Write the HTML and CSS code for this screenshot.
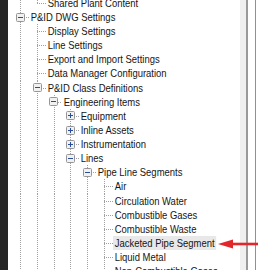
FILE: index.html
```html
<html>
    <head>
        <link rel="stylesheet" href="styles.css">
    </head>
    <body>
        <div class="rail"></div>
        <div class="tree">
            <div class="list">
                <div class="row"><span class="g on"></span><span class="j end"></span><span class="label">Shared Plant Content</span></div>
                <div class="row"><span class="j tee"><svg class="box" width="9" height="9" viewBox="0 0 9 9"><rect x="0.5" y="0.5" width="8" height="8" rx="1" fill="#f1f1f1" stroke="#969696"/><path d="M2 4.5h5" stroke="#2a4d9b"/></svg></span><span class="label">P&amp;ID DWG Settings</span></div>
                <div class="row"><span class="g on"></span><span class="j tee"></span><span class="label">Display Settings</span></div>
                <div class="row"><span class="g on"></span><span class="j tee"></span><span class="label">Line Settings</span></div>
                <div class="row"><span class="g on"></span><span class="j tee"></span><span class="label">Export and Import Settings</span></div>
                <div class="row"><span class="g on"></span><span class="j tee"></span><span class="label">Data Manager Configuration</span></div>
                <div class="row"><span class="g on"></span><span class="j tee"><svg class="box" width="9" height="9" viewBox="0 0 9 9"><rect x="0.5" y="0.5" width="8" height="8" rx="1" fill="#f1f1f1" stroke="#969696"/><path d="M2 4.5h5" stroke="#2a4d9b"/></svg></span><span class="label">P&amp;ID Class Definitions</span></div>
                <div class="row"><span class="g on"></span><span class="g on"></span><span class="j tee"><svg class="box" width="9" height="9" viewBox="0 0 9 9"><rect x="0.5" y="0.5" width="8" height="8" rx="1" fill="#f1f1f1" stroke="#969696"/><path d="M2 4.5h5" stroke="#2a4d9b"/></svg></span><span class="label">Engineering Items</span></div>
                <div class="row"><span class="g on"></span><span class="g on"></span><span class="g on"></span><span class="j tee"><svg class="box" width="9" height="9" viewBox="0 0 9 9"><rect x="0.5" y="0.5" width="8" height="8" rx="1" fill="#f1f1f1" stroke="#969696"/><path d="M2 4.5h5M4.5 2v5" stroke="#2a4d9b"/></svg></span><span class="label">Equipment</span></div>
                <div class="row"><span class="g on"></span><span class="g on"></span><span class="g on"></span><span class="j tee"><svg class="box" width="9" height="9" viewBox="0 0 9 9"><rect x="0.5" y="0.5" width="8" height="8" rx="1" fill="#f1f1f1" stroke="#969696"/><path d="M2 4.5h5M4.5 2v5" stroke="#2a4d9b"/></svg></span><span class="label">Inline Assets</span></div>
                <div class="row"><span class="g on"></span><span class="g on"></span><span class="g on"></span><span class="j tee"><svg class="box" width="9" height="9" viewBox="0 0 9 9"><rect x="0.5" y="0.5" width="8" height="8" rx="1" fill="#f1f1f1" stroke="#969696"/><path d="M2 4.5h5M4.5 2v5" stroke="#2a4d9b"/></svg></span><span class="label">Instrumentation</span></div>
                <div class="row"><span class="g on"></span><span class="g on"></span><span class="g on"></span><span class="j tee"><svg class="box" width="9" height="9" viewBox="0 0 9 9"><rect x="0.5" y="0.5" width="8" height="8" rx="1" fill="#f1f1f1" stroke="#969696"/><path d="M2 4.5h5" stroke="#2a4d9b"/></svg></span><span class="label">Lines</span></div>
                <div class="row"><span class="g on"></span><span class="g on"></span><span class="g on"></span><span class="g on"></span><span class="j tee"><svg class="box" width="9" height="9" viewBox="0 0 9 9"><rect x="0.5" y="0.5" width="8" height="8" rx="1" fill="#f1f1f1" stroke="#969696"/><path d="M2 4.5h5" stroke="#2a4d9b"/></svg></span><span class="label">Pipe Line Segments</span></div>
                <div class="row"><span class="g on"></span><span class="g on"></span><span class="g on"></span><span class="g on"></span><span class="g on"></span><span class="j tee"></span><span class="label">Air</span></div>
                <div class="row"><span class="g on"></span><span class="g on"></span><span class="g on"></span><span class="g on"></span><span class="g on"></span><span class="j tee"></span><span class="label">Circulation Water</span></div>
                <div class="row"><span class="g on"></span><span class="g on"></span><span class="g on"></span><span class="g on"></span><span class="g on"></span><span class="j tee"></span><span class="label">Combustible Gases</span></div>
                <div class="row"><span class="g on"></span><span class="g on"></span><span class="g on"></span><span class="g on"></span><span class="g on"></span><span class="j tee"></span><span class="label">Combustible Waste</span></div>
                <div class="row"><span class="g on"></span><span class="g on"></span><span class="g on"></span><span class="g on"></span><span class="g on"></span><span class="j tee"></span><span class="label sel">Jacketed Pipe Segment</span></div>
                <div class="row"><span class="g on"></span><span class="g on"></span><span class="g on"></span><span class="g on"></span><span class="g on"></span><span class="j tee"></span><span class="label">Liquid Metal</span></div>
                <div class="row"><span class="g on"></span><span class="g on"></span><span class="g on"></span><span class="g on"></span><span class="g on"></span><span class="j tee"></span><span class="label">Non-Combustible Gases</span></div>
            </div>
        </div>
        <div class="track"></div>
        <div class="edge"></div>
        <div class="gap"></div>
        <div class="edge2"></div>
        <div class="tail"></div>
        <!-- annotation arrow pointing at the selected item -->
        <svg class="arrow" width="41" height="10" viewBox="0 0 41 10"><polygon points="1,5 16,0.5 16,9.5" fill="#e3262a"/><rect x="15" y="3.7" width="26" height="2.6" fill="#e3262a"/></svg>
    </body>
</html>
```

FILE: styles.css
```css
body {
    margin: 0;
    height: 270px;
    overflow: hidden;
    display: flex;
    background: #fff;
    font-family: "Liberation Sans", Arial, sans-serif;
    font-size: 11px;
    color: #151515;
    position: relative;
}
.rail {
    width: 8px;
    flex: none;
    background: #262626;
}
.tree {
    flex: 1;
    min-width: 0;
    overflow: hidden;
    padding-left: 4px;
}
.list {
    margin-top: -4.2px;
}
.row {
    height: 14.125px;
    display: flex;
}
.g, .j {
    width: 16.75px;
    flex: none;
}
.g.on {
    background: repeating-linear-gradient(#a0a0a0 0 1px, transparent 1px 2px) no-repeat 8px 0 / 1px 100%;
}
.j {
    display: flex;
    align-items: center;
    justify-content: center;
}
.j.tee {
    background:
        repeating-linear-gradient(#a0a0a0 0 1px, transparent 1px 2px) no-repeat 8px 0 / 1px 100%,
        repeating-linear-gradient(to right, #a0a0a0 0 1px, transparent 1px 2px) no-repeat 8px 7px / 9px 1px;
}
.j.end {
    background:
        repeating-linear-gradient(#a0a0a0 0 1px, transparent 1px 2px) no-repeat 8px 0 / 1px 7px,
        repeating-linear-gradient(to right, #a0a0a0 0 1px, transparent 1px 2px) no-repeat 8px 7px / 9px 1px;
}
.box {
    display: block;
    background: #fff;
}
/* the source font is a narrow one, so squeeze the text horizontally */
.label {
    display: inline-block;
    padding: 0 2px 0 2px;
    line-height: 14px;
    white-space: nowrap;
    transform: scaleX(0.86);
    transform-origin: 0 0;
}
.label.sel {
    background: #e8e8e8;
}
.track {
    width: 6px;
    flex: none;
    background: #f0f0f0;
}
.edge {
    width: 2px;
    flex: none;
    background: #9a9a9a;
}
.gap {
    width: 7px;
    flex: none;
}
.edge2 {
    width: 1px;
    flex: none;
    background: #8b8fa0;
}
.tail {
    width: 2px;
    flex: none;
}
.arrow {
    position: absolute;
    left: 217px;
    top: 239px;
}
```
